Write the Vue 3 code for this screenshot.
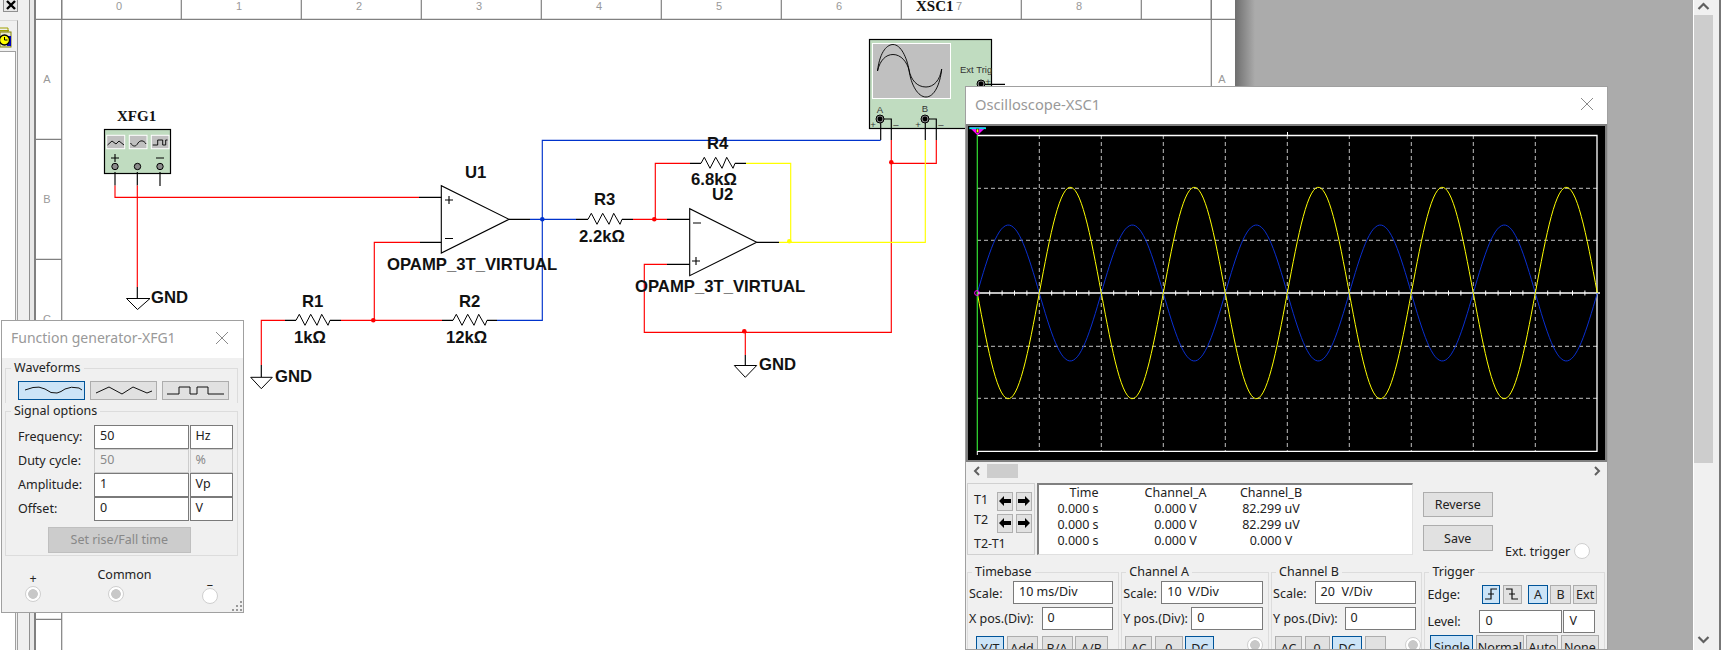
<script setup>
// schematic data, everything in page coordinates
const cols = [
  { x: 119, t: "0" }, { x: 239, t: "1" }, { x: 359, t: "2" }, { x: 479, t: "3" }, { x: 599, t: "4" },
  { x: 719, t: "5" }, { x: 839, t: "6" }, { x: 959, t: "7" }, { x: 1079, t: "8" },
];
const colTicks = [61.7, 181.3, 301.3, 421.3, 541.3, 661.3, 781.3, 901.3, 1021.3, 1141.3, 1211.3];
const rowTicks = [139.3, 259.3, 379.3, 499.3, 619.3];

const blackWires =
  "M115 172V185.5M137.3 172V185.5M160 172V186M419 197.3H441.3M420 242.3H441.3M509 219.3H530" +
  "M285 320.3H296M330 320.3H341M442 320.3H453M487 320.3H497M576 219.3H588M622 219.3H633" +
  "M667 219.3H689.7M690 163.3H701M735 163.3H746M667 264.3H689.7M756.7 242.3H779" +
  "M137.3 287V298.5M261.3 365V377M745.3 355V365.5" +
  "M880.7 119V140M880 119H891.3V140M925.3 119V140M925 119H936.3V140M981 84.3H1005";
const redWires =
  "M115 185.5V197.3H419M137.3 185.5V287M261.3 365V320.3H285M341 320.3H442M374.3 320.3V242.3H420" +
  "M633 219.3H667M655.3 219.3V163.3H690M667 264.3H644.3V332.3H891.3V140M891.3 163.3H936.3V140M745.3 332.3V355";
const blueWires = "M530 219.3H576M497 320.3H542.3V140.3H880.7";
const yellowWires = "M746 163.3H790.7V242.3M779 242.3H925.3V140";

const dots = [
  { x: 373.3, y: 320.3, c: "#f00" }, { x: 654.3, y: 219.3, c: "#f00" }, { x: 891.3, y: 162.3, c: "#f00" },
  { x: 744.3, y: 331.3, c: "#f00" }, { x: 542.3, y: 219.3, c: "#0033cc" }, { x: 789.3, y: 241.3, c: "#ff0" },
];
const zigzag = (x, y) =>
  `M${x} ${y}l3.3 -6l5.7 11l5.7 -11l6.3 11l4.7 -11l6.3 11l2 -5`;
const resistors = [zigzag(296, 320.3), zigzag(453, 320.3), zigzag(588, 219.3), zigzag(701, 163.3)];
const grounds = ["126.5,298.5 150,298.5 137.5,309.5", "250.7,377.3 272.3,377.3 261.3,388.7", "734.3,365.5 756.7,365.5 745.3,377.3"];

const labels = [
  { x: 465, y: 178, t: "U1" }, { x: 387, y: 270, t: "OPAMP_3T_VIRTUAL" }, { x: 635, y: 292, t: "OPAMP_3T_VIRTUAL" },
  { x: 151, y: 303, t: "GND" }, { x: 275, y: 382, t: "GND" }, { x: 759, y: 370, t: "GND" },
  { x: 707, y: 149, t: "R4" }, { x: 691, y: 185, t: "6.8kΩ" }, { x: 712, y: 200, t: "U2" },
  { x: 594, y: 205, t: "R3" }, { x: 579, y: 242, t: "2.2kΩ" }, { x: 302, y: 307, t: "R1" },
  { x: 294, y: 343, t: "1kΩ" }, { x: 459, y: 307, t: "R2" }, { x: 446, y: 343, t: "12kΩ" },
];

// oscilloscope traces, 2 divisions per period
const X0 = 977.3;
const Y0 = 293;
const trace = (amp) => {
  const pts = [];
  for (let x = 0; x <= 620; x += 2) {
    pts.push(`${(X0 + x).toFixed(1)},${(Y0 - amp * Math.sin((2 * Math.PI * x) / 124)).toFixed(1)}`);
  }
  return pts.join(" ");
};
const blueTrace = trace(68);
const yellowTrace = trace(-105.7);
const gridX = [1039.3, 1101.3, 1163.3, 1225.3, 1287.3, 1349.3, 1411.3, 1473.3, 1535.3];
const gridY = [188.3, 240.3, 346.3, 398.3];
const ticks = [];
for (let x = X0 + 12.4; x < 1597; x += 12.4) ticks.push(x.toFixed(1));

const signalRows = [
  { label: "Frequency:", value: "50", unit: "Hz" },
  { label: "Duty cycle:", value: "50", unit: "%", off: true },
  { label: "Amplitude:", value: "1", unit: "Vp" },
  { label: "Offset:", value: "0", unit: "V" },
];
const readings = [
  ["0.000 s", "0.000 V", "82.299 uV"],
  ["0.000 s", "0.000 V", "82.299 uV"],
  ["0.000 s", "0.000 V", "0.000 V"],
];
</script>

<template>
  <div class="desktop">
    <!-- left side of the main window -->
    <div class="toolStrip">
      <div class="palette">
        <div class="closeBtn">
          <svg width="12" height="11" viewBox="0 0 12 11"><path d="M2 1l8 8M10 1l-8 8" stroke="#000" stroke-width="2.4" /></svg>
        </div>
        <div class="paletteBody">
          <svg class="clockIcon" width="12" height="21" viewBox="0 0 12 21">
            <path d="M0 1H8V5H0M0 3.5H9" fill="none" stroke="#a0a000" />
            <rect x="0" y="5" width="11" height="15" fill="#e8e8d0" stroke="#808000" />
            <rect x="7" y="9" width="4" height="10" fill="#0000c0" />
            <circle cx="4.500" cy="13" r="5" fill="#ffff00" stroke="#000" stroke-width="1.3" />
            <path d="M4.500 10v3h3" fill="none" stroke="#000" />
          </svg>
          <div class="paletteList"></div>
        </div>
      </div>
      <div class="gutter"></div>
      <div class="sash"></div>
    </div>

    <!-- schematic sheet -->
    <div class="sheet">
      <svg class="sheetSvg" width="1199" height="650" viewBox="36 0 1199 650">
        <g class="ruler">
          <path d="M36 19.300H1235M61.700 0V650M1211.300 0V650" />
          <path v-for="x in colTicks" :key="x" :d="`M${x} 0V19.300`" />
          <path v-for="y in rowTicks" :key="y" :d="`M36 ${y}H61.700M1211.300 ${y}H1235`" />
        </g>
        <text v-for="c in cols" :key="c.t" class="rulerText" :x="c.x" y="10" text-anchor="middle">{{ c.t }}</text>
        <text class="rulerText" x="47" y="83" text-anchor="middle">A</text>
        <text class="rulerText" x="47" y="203" text-anchor="middle">B</text>
        <text class="rulerText" x="47" y="323" text-anchor="middle">C</text>
        <text class="rulerText" x="1222" y="83" text-anchor="middle">A</text>

        <!-- function generator symbol -->
        <text class="partName" x="117" y="120.500">XFG1</text>
        <rect x="104.500" y="129.500" width="66" height="44" fill="#c0dcc0" stroke="#000" stroke-width="1.200" />
        <g fill="#c0c0c0" stroke="#fff">
          <rect x="106.700" y="135.300" width="18" height="13.400" />
          <rect x="129.300" y="135.300" width="17.700" height="13.400" />
          <rect x="151.300" y="135.300" width="17.700" height="13.400" />
        </g>
        <g fill="none" stroke="#000" stroke-width="0.900">
          <path d="M107.500 145L112 141L116 144L119 141L124 145" />
          <path d="M130.500 143C133 147 136 147 138 143C140 140 144 140 146 144" />
          <path d="M152.700 145H157.700V140H162.700V145H165.700V140H167.500" />
          <path d="M111 158H119M115 154V162M156 158H164" stroke-width="1.100" />
        </g>
        <g fill="#8a8a8a" stroke="#000">
          <circle cx="115" cy="166.500" r="3.200" />
          <circle cx="137.500" cy="166.500" r="3.200" />
          <circle cx="160" cy="166.500" r="3.200" />
        </g>

        <!-- oscilloscope symbol -->
        <text class="partName" x="916" y="10.500">XSC1</text>
        <rect x="869.500" y="39.500" width="122" height="89" fill="#c0dcc0" stroke="#000" stroke-width="1.200" />
        <rect x="872.500" y="43.500" width="78" height="55" fill="#c0c0c0" stroke="#fff" />
        <g fill="none" stroke="#000" stroke-width="0.900">
          <path d="M877.500 71C880 50 888 44.500 893 44.500C901 44.500 907 58 909 70C911 85 918 97 926 97C934 97 940 85 941.700 69" />
          <path d="M877.500 71C880 60 886 54.500 893 54.500C901 54.500 907 62 909 70C911 80 917 87 926 87C934 87 940 80 941.700 69" />
        </g>
        <text class="tinyText" x="960" y="73">Ext Trig</text>
        <text class="tinyText" x="880" y="113" text-anchor="middle">A</text>
        <text class="tinyText" x="925" y="112" text-anchor="middle">B</text>
        <text class="tinyText" x="873" y="128" text-anchor="middle">+</text>
        <text class="tinyText" x="896" y="128" text-anchor="middle">–</text>
        <text class="tinyText" x="918" y="128" text-anchor="middle">+</text>
        <text class="tinyText" x="941" y="128" text-anchor="middle">–</text>
        <text class="tinyText" x="988" y="85" text-anchor="middle">+</text>

        <!-- wires -->
        <path class="wire" :d="blackWires" stroke="#000" />
        <path class="wire" :d="redWires" stroke="#f00" />
        <path class="wire" :d="blueWires" stroke="#0033cc" />
        <path class="wire" :d="yellowWires" stroke="#ffff00" />
        <g fill="#8a8a8a" stroke="#000">
          <circle cx="880" cy="119" r="4" />
          <circle cx="925" cy="119" r="4" />
          <circle cx="981" cy="84" r="4" />
        </g>
        <g fill="#000">
          <circle cx="880" cy="119" r="2.400" />
          <circle cx="925" cy="119" r="2.400" />
          <circle cx="981" cy="84" r="2.400" />
        </g>
        <circle v-for="d in dots" :key="d.x" :cx="d.x" :cy="d.y" r="2.300" :fill="d.c" />
        <path v-for="r in resistors" :key="r" :d="r" fill="none" stroke="#000" stroke-width="1" />

        <!-- op amps -->
        <g fill="none" stroke="#000" stroke-width="1.100">
          <polygon points="441.300,185.700 441.300,253 509,219.300" />
          <polygon points="689.700,208.700 689.700,275.700 756.700,242.300" />
          <path d="M445 200H453M449 196V204M445 238.500H453M693 223H701M692 261H700M696 257V265" />
        </g>
        <polygon v-for="g in grounds" :key="g" :points="g" fill="#fff" stroke="#000" />
        <text v-for="l in labels" :key="l.x + l.t" class="partText" :x="l.x" :y="l.y">{{ l.t }}</text>
      </svg>
    </div>
    <div class="shade"></div>

    <!-- workspace scrollbar -->
    <div class="vScroll">
      <svg width="19" height="15" viewBox="0 0 19 15"><path d="M4.500 9l5 -5l5 5" fill="none" stroke="#606060" stroke-width="2.200" /></svg>
      <div class="vThumb"></div>
      <svg class="vDown" width="19" height="12" viewBox="0 0 19 12"><path d="M4.500 3l5 5l5 -5" fill="none" stroke="#606060" stroke-width="2.200" /></svg>
    </div>

    <!-- Function generator window -->
    <div class="win fnWin">
      <div class="titleBar fnTitle">
        <span>Function generator-XFG1</span>
        <svg width="14" height="14" viewBox="0 0 14 14"><path d="M1 1l12 12M13 1l-12 12" stroke="#8a8a8a" /></svg>
      </div>
      <div class="fnBody">
        <fieldset class="wavesGroup">
          <legend>Waveforms</legend>
          <div class="waveBtns">
            <div class="btn on waveBtn">
              <svg width="65" height="17" viewBox="0 0 65 17"><path d="M6 8L14 5.500Q20 4 26 7Q32 12 38 11Q42 10 46 7Q52 4 60 6L63 8" fill="none" stroke="#111" /></svg>
            </div>
            <div class="btn waveBtn">
              <svg width="65" height="17" viewBox="0 0 65 17"><path d="M5 11L18 5L31 12L42 5L56 11L61 9" fill="none" stroke="#111" /></svg>
            </div>
            <div class="btn waveBtn">
              <svg width="65" height="17" viewBox="0 0 65 17"><path d="M4 12H16V5H27V12H34V5H45V12H61" fill="none" stroke="#111" /></svg>
            </div>
          </div>
        </fieldset>
        <fieldset class="signalGroup">
          <legend>Signal options</legend>
          <div class="signalGrid">
            <template v-for="row in signalRows" :key="row.label">
              <span>{{ row.label }}</span>
              <div class="field" :class="{ off: row.off }">{{ row.value }}</div>
              <div class="field" :class="{ off: row.off }">{{ row.unit }}</div>
            </template>
          </div>
          <div class="riseBtn">Set rise/Fall time</div>
        </fieldset>
        <div class="terminals">
          <div class="termCol plus"><span>+</span><i class="radio filled"></i></div>
          <div class="termCol common"><span>Common</span><i class="radio filled"></i></div>
          <div class="termCol minus"><span>–</span><i class="radio"></i></div>
        </div>
      </div>
      <svg class="grip" width="12" height="12" viewBox="0 0 12 12" fill="#999">
        <rect x="9" y="1" width="2" height="2" /><rect x="5" y="5" width="2" height="2" /><rect x="9" y="5" width="2" height="2" />
        <rect x="1" y="9" width="2" height="2" /><rect x="5" y="9" width="2" height="2" /><rect x="9" y="9" width="2" height="2" />
      </svg>
    </div>

    <!-- Oscilloscope window -->
    <div class="win scopeWin">
      <div class="titleBar scopeTitle">
        <span>Oscilloscope-XSC1</span>
        <svg width="14" height="14" viewBox="0 0 14 14"><path d="M1 1l12 12M13 1l-12 12" stroke="#8a8a8a" /></svg>
      </div>
      <div class="scopeBody">
        <div class="display">
          <svg width="638" height="334" viewBox="968 126 638 334">
            <g stroke="#c0c0c0" stroke-dasharray="4 3">
              <path v-for="x in gridX" :key="x" :d="`M${x} 135V451`" />
              <path v-for="y in gridY" :key="y" :d="`M977 ${y}H1597`" />
            </g>
            <path d="M977 135.500H1597V451.300H977" fill="none" stroke="#fff" stroke-width="1.300" />
            <path d="M977 293H1600" stroke="#fff" stroke-width="1.300" />
            <path v-for="t in ticks" :key="t" :d="`M${t} 290.500V295.500`" stroke="#fff" />
            <path d="M1287.500 132V135M977.300 451V455" stroke="#fff" />
            <polyline :points="blueTrace" fill="none" stroke="#0a2fd0" stroke-width="1" />
            <polyline :points="yellowTrace" fill="none" stroke="#ffff00" stroke-width="1" />
            <path d="M977.300 135V451" stroke="#33e033" stroke-width="1.200" />
            <circle cx="977" cy="293" r="2.400" fill="none" stroke="#ff00ff" />
            <polygon points="969.300,127.300 986,127.300 977.500,135.300" fill="#ff00ff" />
            <rect x="969.300" y="127.300" width="16.700" height="1.800" fill="#00e0e0" />
            <rect x="976.300" y="129" width="2.500" height="3.500" fill="#ffff00" stroke="#000" stroke-width="0.500" />
          </svg>
        </div>
        <div class="hScroll">
          <svg width="10" height="12" viewBox="0 0 10 12"><path d="M7 2L3 6L7 10" fill="none" stroke="#606060" stroke-width="2" /></svg>
          <div class="hThumb"></div>
          <svg class="hRight" width="10" height="12" viewBox="0 0 10 12"><path d="M3 2L7 6L3 10" fill="none" stroke="#606060" stroke-width="2" /></svg>
        </div>

        <div class="cursorRow">
          <div class="cursorBox">
            <span>T1</span>
            <div class="arrowBtn"><svg width="12" height="10" viewBox="0 0 12 10"><path d="M0 5L5 0V3H12V7H5V10Z" /></svg></div>
            <div class="arrowBtn"><svg width="12" height="10" viewBox="0 0 12 10"><path d="M12 5L7 0V3H0V7H7V10Z" /></svg></div>
            <span class="t2Label">T2</span>
            <div class="arrowBtn"><svg width="12" height="10" viewBox="0 0 12 10"><path d="M0 5L5 0V3H12V7H5V10Z" /></svg></div>
            <div class="arrowBtn"><svg width="12" height="10" viewBox="0 0 12 10"><path d="M12 5L7 0V3H0V7H7V10Z" /></svg></div>
            <span class="diffLabel">T2-T1</span>
          </div>
          <div class="readout">
            <span class="timeHead">Time</span><span>Channel_A</span><span>Channel_B</span>
            <template v-for="(r, i) in readings" :key="i">
              <span class="timeCell">{{ r[0] }}</span><span>{{ r[1] }}</span><span>{{ r[2] }}</span>
            </template>
          </div>
          <div class="sideBtns">
            <div class="btn sideBtn">Reverse</div>
            <div class="btn sideBtn">Save</div>
          </div>
          <div class="extTrig"><span>Ext. trigger</span><i class="radio"></i></div>
        </div>

        <div class="groups">
          <fieldset class="timeGroup">
            <legend>Timebase</legend>
            <div class="scaleRow"><span>Scale:</span><div class="field w100">10 ms/Div</div></div>
            <div class="posRow"><span>X pos.(Div):</span><div class="field w71">0</div></div>
            <div class="modeRow">
              <div class="btn on" style="width: 28px">Y/T</div>
              <div class="btn" style="width: 31px">Add</div>
              <div class="btn gap1" style="width: 31px">B/A</div>
              <div class="btn" style="width: 33px">A/B</div>
            </div>
          </fieldset>
          <fieldset class="chanA">
            <legend>Channel A</legend>
            <div class="scaleRow"><span>Scale:</span><div class="field w101">10&nbsp; V/Div</div></div>
            <div class="posRow"><span>Y pos.(Div):</span><div class="field w71">0</div></div>
            <div class="modeRow">
              <div class="btn" style="width: 27px">AC</div>
              <div class="btn" style="width: 28px">0</div>
              <div class="btn on" style="width: 29px">DC</div>
              <i class="radio filled chanRadioA"></i>
            </div>
          </fieldset>
          <fieldset class="chanB">
            <legend>Channel B</legend>
            <div class="scaleRow"><span>Scale:</span><div class="field w101">20&nbsp; V/Div</div></div>
            <div class="posRow"><span>Y pos.(Div):</span><div class="field w71">0</div></div>
            <div class="modeRow">
              <div class="btn" style="width: 27px">AC</div>
              <div class="btn" style="width: 25px">0</div>
              <div class="btn on" style="width: 30px">DC</div>
              <div class="btn" style="width: 21px">-</div>
              <i class="radio filled chanRadioB"></i>
            </div>
          </fieldset>
          <fieldset class="trigGroup">
            <legend>Trigger</legend>
            <div class="edgeRow">
              <span class="trigLabel">Edge:</span>
              <div class="btn on edgeBtn"><svg width="14" height="14" viewBox="0 0 14 14"><path d="M1 12H7V2H13M4 7H10" fill="none" stroke="#111" stroke-width="1.200" /></svg></div>
              <div class="btn edgeBtn"><svg width="14" height="14" viewBox="0 0 14 14"><path d="M1 2H7V12H13M4 7H10" fill="none" stroke="#111" stroke-width="1.200" /></svg></div>
              <div class="btn on edgeBtn srcGap">A</div>
              <div class="btn edgeBtn wide">B</div>
              <div class="btn edgeBtn ext">Ext</div>
            </div>
            <div class="levelRow">
              <span class="trigLabel">Level:</span>
              <div class="field levelField">0</div>
              <div class="field levelUnit">V</div>
            </div>
            <div class="modeRow trigModes">
              <div class="btn on" style="width: 43px">Single</div>
              <div class="btn" style="width: 48px">Normal</div>
              <div class="btn" style="width: 32px">Auto</div>
              <div class="btn" style="width: 38px">None</div>
            </div>
          </fieldset>
        </div>
      </div>
    </div>
  </div>
</template>

<style>
html,
body {
  margin: 0;
  overflow: hidden;
}
</style>

<style scoped>
.desktop {
  position: relative;
  display: flex;
  width: 1721px;
  height: 650px;
  overflow: hidden;
  background: #ababab;
  font-family: "Noto Sans", "Liberation Sans", sans-serif;
  font-size: 12.5px;
  color: #222;
}

/* ---------- left strip ---------- */
.toolStrip {
  display: flex;
  flex: none;
  width: 36px;
  background: #f0f0f0;
}
.palette {
  width: 18px;
}
.closeBtn {
  display: flex;
  align-items: center;
  justify-content: center;
  width: 15px;
  height: 12px;
  margin-left: 3px;
  box-sizing: border-box;
  border: 1px solid #909090;
  border-top: none;
  background: #e8e8e8;
}
.paletteBody {
  height: 630px;
  margin-top: 8px;
  box-sizing: border-box;
  padding-top: 6px;
  border-top: 1px solid #d8d8d8;
  border-right: 1px solid #a0a0a0;
}
.clockIcon {
  display: block;
}
.paletteList {
  height: 600px;
  width: 16px;
  margin-top: 3px;
  box-sizing: border-box;
  background: #fff;
  border-top: 1px solid #a0a0a0;
  border-right: 1px solid #a0a0a0;
}
.gutter {
  width: 11px;
}
.sash {
  width: 7px;
  box-sizing: border-box;
  border-left: 1px solid #909090;
  border-right: 2px solid #808080;
  background: #e8e8e8;
}

/* ---------- sheet ---------- */
.sheet {
  flex: none;
  width: 1199px;
  background: #fff;
}
.sheetSvg {
  display: block;
}
.ruler path {
  fill: none;
  stroke: #808080;
  stroke-width: 1.200;
}
.rulerText {
  font-family: "Liberation Sans", sans-serif;
  font-size: 11px;
  fill: #999;
}
.partName {
  font-family: "Liberation Serif", serif;
  font-size: 15px;
  font-weight: 700;
  fill: #111;
}
.partText {
  font-family: "Liberation Sans", sans-serif;
  font-size: 16.700px;
  font-weight: 700;
  fill: #111;
}
.tinyText {
  font-family: "Liberation Sans", sans-serif;
  font-size: 9.500px;
  fill: #333;
}
.wire {
  fill: none;
  stroke-width: 1.150;
}
.shade {
  flex: none;
  width: 20px;
  background: linear-gradient(90deg, #6e6e6e, #ababab);
}
.vScroll {
  display: flex;
  flex-direction: column;
  align-items: flex-start;
  width: 28px;
  height: 650px;
  margin-left: auto;
  box-sizing: border-box;
  border-left: 1px solid #fff;
  border-right: 2px solid #777;
  background: #f0f0f0;
}
.vThumb {
  width: 19px;
  height: 448px;
  background: #cdcdcd;
}
.vDown {
  margin-top: auto;
  margin-bottom: 4px;
}

/* ---------- floating windows ---------- */
.win {
  position: absolute;
  box-sizing: border-box;
  border: 1px solid #a0a0a0;
  background: #f0f0f0;
  overflow: hidden;
}
.titleBar {
  display: flex;
  align-items: center;
  justify-content: space-between;
  box-sizing: border-box;
  height: 37px;
  padding-bottom: 4px;
  background: #fff;
  color: #999;
}
.fnWin {
  left: 1px;
  top: 320px;
  width: 243px;
  height: 293px;
}
.fnTitle {
  padding-left: 9px;
  padding-right: 14px;
  font-size: 14px;
}
.scopeWin {
  left: 965px;
  top: 86px;
  width: 643px;
  height: 564px;
}
.scopeTitle {
  padding-left: 9px;
  padding-right: 13px;
  font-size: 14.700px;
}

fieldset {
  margin: 0;
  min-width: 0;
  box-sizing: border-box;
  border: 1px solid #dcdcdc;
}
legend {
  margin-left: -7px;
  padding: 0 3px;
  line-height: 16px;
}

/* ---------- function generator ---------- */
.fnBody {
  padding: 2px 0 0 3px;
}
.wavesGroup {
  width: 233px;
  padding: 5px 0 3px 12px;
  border-bottom: none;
}
.waveBtns {
  display: flex;
  gap: 4.600px;
}
.waveBtn {
  width: 67.400px;
  height: 19.400px;
}
.signalGroup {
  width: 233px;
  padding: 6px 0 2px 12px;
}
.signalGrid {
  display: grid;
  grid-template-columns: 75px 94.500px 43px;
  grid-auto-rows: 23px;
  row-gap: 1px;
  column-gap: 1px;
  align-items: center;
}
.field {
  display: flex;
  align-items: center;
  box-sizing: border-box;
  height: 23.500px;
  padding: 0 0 2px 5px;
  border: 1px solid #7a7a7a;
  background: #fff;
}
.field.off {
  border-color: #cccccc;
  background: #f0f0f0;
  color: #8a8a8a;
}
.riseBtn {
  width: 142.500px;
  height: 25.400px;
  margin: 7px 0 0 30px;
  box-sizing: border-box;
  border: 1px solid #bfbfbf;
  background: #cccccc;
  color: #888;
  line-height: 23px;
  text-align: center;
}
.terminals {
  display: flex;
  align-items: flex-end;
  height: 46px;
}
.termCol {
  display: flex;
  flex-direction: column;
  align-items: center;
  line-height: 14px;
}
.plus {
  width: 16px;
  margin-left: 20px;
}
.common {
  width: 16px;
  margin-left: 67px;
}
.common span {
  margin-bottom: 4px;
  padding-left: 17px;
}
.minus {
  width: 16px;
  margin-left: 78px;
  margin-bottom: -2px;
}
.minus span {
  margin-bottom: -4px;
}
.radio {
  display: block;
  flex: none;
  width: 16px;
  height: 16px;
  box-sizing: border-box;
  border: 1px solid #cfcfcf;
  border-radius: 50%;
  background: #fff;
}
.radio.filled {
  background: radial-gradient(circle, #c8c8c8 0 4.500px, #fff 5.200px);
}
.grip {
  position: absolute;
  right: 0;
  bottom: 0;
}

/* shared buttons */
.btn {
  display: flex;
  flex: none;
  align-items: center;
  justify-content: center;
  box-sizing: border-box;
  border: 1px solid #adadad;
  background: #e1e1e1;
  white-space: nowrap;
}
.btn.on {
  border-color: #005499;
  background: #cce4f7;
}

/* ---------- oscilloscope ---------- */
.display {
  width: 641px;
  height: 338px;
  box-sizing: border-box;
  border: 2px solid #808080;
  background: #000;
}
.display svg {
  display: block;
}
.hScroll {
  display: flex;
  align-items: center;
  height: 18.500px;
  padding-left: 6px;
}
.hThumb {
  width: 31px;
  height: 14px;
  margin-left: 5px;
  background: #cdcdcd;
}
.hRight {
  margin-left: auto;
  margin-right: 5px;
}
.cursorRow {
  display: flex;
  align-items: flex-start;
  margin-top: 2px;
  padding-left: 1px;
}
.cursorBox {
  display: grid;
  grid-template-columns: 19.500px 16px 16px;
  grid-template-rows: 19.500px 19.500px auto;
  column-gap: 3px;
  row-gap: 2.500px;
  width: 68px;
  height: 72px;
  box-sizing: border-box;
  padding: 8px 0 0 6px;
  border: 1px solid #d0d0d0;
  line-height: 16px;
}
.t2Label {
  margin-top: -2px;
}
.diffLabel {
  grid-column: 1 / 4;
}
.arrowBtn {
  display: flex;
  align-items: center;
  justify-content: center;
  border: 1px solid #b0b0b0;
  background: #e1e1e1;
}
.readout {
  display: grid;
  grid-template-columns: 74px 109px 82px;
  grid-auto-rows: 16px;
  align-items: center;
  justify-items: center;
  align-content: start;
  width: 376px;
  height: 72px;
  margin-left: 2px;
  box-sizing: border-box;
  padding: 0 0 0 8px;
  border: 1px solid #e0e0e0;
  border-top: 2px solid #808080;
  border-left: 2px solid #808080;
  background: #fff;
}
.timeCell {
  margin-right: 12px;
}
.sideBtns {
  display: flex;
  flex-direction: column;
  gap: 8.300px;
  margin: 9px 0 0 9.500px;
}
.sideBtn {
  width: 70.500px;
  height: 25.700px;
}
.extTrig {
  display: flex;
  align-items: center;
  gap: 4px;
  margin: 60px 0 0 12px;
}
.groups {
  display: flex;
  gap: 2.300px;
  margin-top: 4.600px;
  padding-left: 1px;
}
.groups fieldset {
  flex: none;
  height: 110px;
  padding: 0.700px 0 0 1px;
}
.timeGroup {
  width: 152px;
}
.chanA {
  width: 147.500px;
}
.chanB {
  width: 151px;
}
.trigGroup {
  width: 181px;
}
.groups legend {
  margin-left: 3px;
}
.scaleRow,
.posRow {
  display: flex;
  align-items: center;
  justify-content: space-between;
  height: 23.400px;
  padding-right: 5px;
}
.scaleRow span {
  padding-top: 3px;
}
.posRow {
  margin-top: 2.700px;
}
.w100 {
  width: 100px;
}
.w101 {
  width: 101.500px;
}
.w71 {
  width: 71.500px;
}
.modeRow {
  display: flex;
  gap: 2.500px;
  align-items: flex-start;
  height: 25px;
  margin-top: 5.600px;
  padding-left: 2px;
}
.modeRow .btn {
  height: 25px;
}
.timeGroup .modeRow {
  padding-left: 7px;
}
.gap1 {
  margin-left: 1.500px;
}
.chanRadioA {
  margin: 1.500px 0 0 30px;
}
.chanRadioB {
  margin: 1.500px 0 0 17px;
}
.edgeRow {
  display: flex;
  align-items: center;
  gap: 2.600px;
  height: 19.400px;
  margin-top: 4px;
  padding-left: 1px;
}
.trigLabel {
  width: 52px;
  flex: none;
}
.edgeBtn {
  width: 18.500px;
  height: 19.400px;
}
.srcGap {
  margin-left: 4px;
  width: 19.500px;
}
.wide {
  width: 20.500px;
}
.ext {
  width: 23.500px;
}
.levelRow {
  display: flex;
  align-items: center;
  height: 23.400px;
  margin-top: 5.600px;
  padding-left: 1px;
}
.levelField {
  width: 83px;
}
.levelUnit {
  width: 31.700px;
  margin-left: 1px;
}
.trigModes {
  margin-top: 1.600px;
  padding-left: 4px;
}
</style>
